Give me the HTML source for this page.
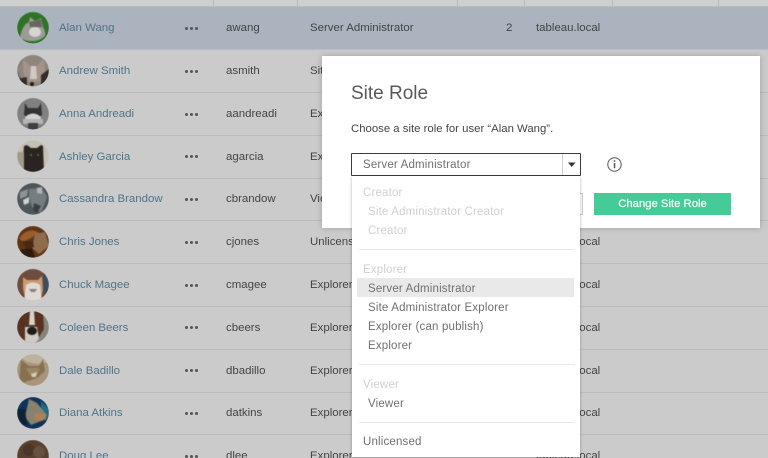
<!DOCTYPE html>
<html><head><meta charset="utf-8">
<style>
html,body{margin:0;padding:0}
body{width:768px;height:458px;overflow:hidden;position:relative;background:#cbcbcb;font-family:"Liberation Sans",sans-serif;font-size:11.45px;color:#444}
#w{position:absolute;left:0;top:0;width:768px;height:458px;overflow:hidden;filter:blur(.3px)}
.a{position:absolute;white-space:nowrap}
.row{position:absolute;left:0;width:768px;height:42px;border-bottom:1px solid #bcbcbc}
.t{position:absolute;top:0;line-height:42px;white-space:nowrap}
.n{left:59px;color:#4f7489}
.d{left:185px;top:18.500px;width:14px;height:4px}
.d i{position:absolute;top:1px;width:3px;height:3px;border-radius:50%;background:#555}
.u{left:226px}.r{left:310px}.s{left:536px}
.av{position:absolute;left:17px;top:4.500px;width:32px;height:32px;border-radius:50%;clip-path:circle(50%);filter:blur(.5px)}
.tick{position:absolute;top:0;width:1px;height:6px;background:#bcbcbc}
.m{font-size:11.5px;letter-spacing:.17px;position:absolute;white-space:nowrap;line-height:14px}
.g{color:#d0d0d0}.b{color:#707070}
.sep{position:absolute;left:359px;width:216px;height:1px;background:#e8e8e8}
</style></head><body><div id="w">
<div class="a" style="left:0;top:0;width:768px;height:6px;background:#cfcfcf;border-bottom:1px solid #bcbcbc"></div>
<div class="tick" style="left:213px"></div><div class="tick" style="left:297px"></div><div class="tick" style="left:457px"></div><div class="tick" style="left:524px"></div><div class="tick" style="left:612px"></div><div class="tick" style="left:718px"></div>

<div class="row" style="top:7px;background:#aab3be"><svg class="av" viewBox="0 0 32 32"><rect width="32" height="32" fill="#2f7325"/><path d="M3 26Q5 13 12 10L13 5 18 9 24 6 26 15Q29 20 28 24Q22 30 12 29Q6 28 3 26Z" fill="#9c9c96"/><path d="M12 10L18 9 24 7 25 15 13 15Z" fill="#66665f"/><ellipse cx="18" cy="20" rx="6" ry="5" fill="#d6d5d2"/></svg><div class="t n">Alan Wang</div><div class="t d"><i style="left:0"></i><i style="left:5px"></i><i style="left:10px"></i></div><div class="t u">awang</div><div class="t r">Server Administrator</div><div class="t" style="left:506px">2</div><div class="t s">tableau.local</div></div>

<div class="row" style="top:50px"><svg class="av" viewBox="0 0 32 32"><rect width="32" height="32" fill="#6d7570"/><path d="M0 14L9 0H26L32 10V18L24 32H8Z" fill="#8f867b"/><path d="M6 4l7 7h7l7-8 1 14-5 10H11L6 17z" fill="#a3938a"/><path d="M14 11h5l1 13h-7z" fill="#d0cac4"/><path d="M0 24L10 22V32H0zM24 20L32 14V32H24z" fill="#332e2b"/><circle cx="15" cy="29" r="2" fill="#1d1d1d"/></svg><div class="t n">Andrew Smith</div><div class="t d"><i style="left:0"></i><i style="left:5px"></i><i style="left:10px"></i></div><div class="t u">asmith</div><div class="t r">Site Administrator</div></div>

<div class="row" style="top:93px"><svg class="av" viewBox="0 0 32 32"><rect width="32" height="32" fill="#808080"/><path d="M8 5l3 5h10l3-5 1 12-5 4H12l-5-4z" fill="#333"/><path d="M8 19q8-7 16 0l-1 5H9z" fill="#d2d2d2"/><path d="M6 21H26V26H6z" fill="#b5b5b5"/><path d="M11 25H21V32H11z" fill="#404040"/></svg><div class="t n">Anna Andreadi</div><div class="t d"><i style="left:0"></i><i style="left:5px"></i><i style="left:10px"></i></div><div class="t u">aandreadi</div><div class="t r">Explorer</div></div>

<div class="row" style="top:135.700px"><svg class="av" viewBox="0 0 32 32"><rect width="32" height="32" fill="#c6bfb3"/><path d="M7 6l3-1 4 3h6l4-3 2 1 1 26H5z" fill="#292421"/><path d="M0 12l7 0 0 20H0z" fill="#a39a8d"/><circle cx="14" cy="15" r="1" fill="#77683a"/><circle cx="21" cy="15" r="1" fill="#77683a"/></svg><div class="t n">Ashley Garcia</div><div class="t d"><i style="left:0"></i><i style="left:5px"></i><i style="left:10px"></i></div><div class="t u">agarcia</div><div class="t r">Explorer</div></div>

<div class="row" style="top:178.400px"><svg class="av" viewBox="0 0 32 32"><rect width="32" height="32" fill="#4e565a"/><path d="M12 6L25 5L30 14L24 30L15 24L12 14z" fill="#767d82"/><path d="M3 9L11 6L10 13L3 16z" fill="#8d9498"/><path d="M6 17L12 14L12 20L7 22z" fill="#cfd0d0"/><path d="M20 5L25 4L25 11L20 10z" fill="#b0b5b8"/><path d="M17 20L24 23L20 30L16 27z" fill="#3a3f42"/></svg><div class="t n">Cassandra Brandow</div><div class="t d"><i style="left:0"></i><i style="left:5px"></i><i style="left:10px"></i></div><div class="t u">cbrandow</div><div class="t r">Viewer</div></div>

<div class="row" style="top:221.200px"><svg class="av" viewBox="0 0 32 32"><rect width="32" height="32" fill="#623416"/><path d="M2 12Q12 0 22 7L14 12L6 16z" fill="#9a5d2c"/><path d="M18 8L28 6L32 20L22 28L15 22z" fill="#8f6c4e"/><path d="M5 15h11l1 6-8 2z" fill="#472914"/><path d="M3 24L15 22L18 32H6z" fill="#2e1a0f"/></svg><div class="t n">Chris Jones</div><div class="t d"><i style="left:0"></i><i style="left:5px"></i><i style="left:10px"></i></div><div class="t u">cjones</div><div class="t r">Unlicensed</div><div class="t s">tableau.local</div></div>

<div class="row" style="top:264px"><svg class="av" viewBox="0 0 32 32"><rect width="32" height="32" fill="#6e4c3e"/><path d="M26 0H32V24L26 24z" fill="#3f4c5c"/><path d="M6 8l4 3h11l4-4 1 14-3 11H9L6 20z" fill="#cc9a70"/><path d="M9 16q7-5 14 0l2 16H7z" fill="#dedbd7"/><path d="M12 20l8 0-2 3h-4z" fill="#8c8078"/></svg><div class="t n">Chuck Magee</div><div class="t d"><i style="left:0"></i><i style="left:5px"></i><i style="left:10px"></i></div><div class="t u">cmagee</div><div class="t r">Explorer</div><div class="t s">tableau.local</div></div>

<div class="row" style="top:306.800px"><svg class="av" viewBox="0 0 32 32"><rect width="32" height="32" fill="#85847b"/><path d="M0 10L6 0H26L27 18L18 32H0z" fill="#573220"/><path d="M13 0h4l1 14h-6z" fill="#d8d2c8"/><path d="M8 16h12l2 12-4 4H8z" fill="#d0ccc5"/><ellipse cx="15" cy="20" rx="5" ry="4" fill="#1f1b1a"/></svg><div class="t n">Coleen Beers</div><div class="t d"><i style="left:0"></i><i style="left:5px"></i><i style="left:10px"></i></div><div class="t u">cbeers</div><div class="t r">Explorer</div><div class="t s">tableau.local</div></div>

<div class="row" style="top:349.600px"><svg class="av" viewBox="0 0 32 32"><rect width="32" height="32" fill="#a8957b"/><path d="M0 0H32V8L20 10L10 8z" fill="#bdb29c"/><path d="M4 6L12 12L22 12L26 5L28 17L20 24L2 30z" fill="#87714f"/><path d="M9 14h14l-3 7h-7z" fill="#9b8768"/><path d="M14 20l6-2-1 5h-4z" fill="#d6ccb9"/></svg><div class="t n">Dale Badillo</div><div class="t d"><i style="left:0"></i><i style="left:5px"></i><i style="left:10px"></i></div><div class="t u">dbadillo</div><div class="t r">Explorer</div><div class="t s">tableau.local</div></div>

<div class="row" style="top:392.400px"><svg class="av" viewBox="0 0 32 32"><rect width="32" height="32" fill="#10335a"/><path d="M24 4L32 12V24L24 22z" fill="#1f6a84"/><path d="M12 2L20 6L30 18L24 24L14 28L8 20z" fill="#878270"/><ellipse cx="23" cy="20" rx="6" ry="4" fill="#ad8058"/><path d="M0 12L8 12L10 28H0z" fill="#0e2236"/></svg><div class="t n">Diana Atkins</div><div class="t d"><i style="left:0"></i><i style="left:5px"></i><i style="left:10px"></i></div><div class="t u">datkins</div><div class="t r">Explorer</div><div class="t s">tableau.local</div></div>

<div class="row" style="top:435.200px"><svg class="av" viewBox="0 0 32 32"><rect width="32" height="32" fill="#57402f"/><circle cx="12" cy="10" r="6" fill="#4a3526"/><circle cx="22" cy="12" r="6" fill="#665040"/></svg><div class="t n">Doug Lee</div><div class="t d"><i style="left:0"></i><i style="left:5px"></i><i style="left:10px"></i></div><div class="t u">dlee</div><div class="t r">Explorer</div><div class="t s">tableau.local</div></div>

<!-- modal -->
<div class="a" style="left:322px;top:56px;width:438px;height:172px;background:#fff;box-shadow:0 0 6px rgba(0,0,0,.22)"></div>
<div class="a" style="left:351px;top:82px;font-size:19px;line-height:24px;color:#595959">Site Role</div>
<div class="a" style="left:351px;top:122px;line-height:14px;font-size:11.360px;color:#454545">Choose a site role for user “Alan Wang”.</div>
<div class="a" style="left:351px;top:153px;width:228px;height:21px;border:1px solid #3c3c3c;border-radius:1px;background:#fff"></div>
<div class="m b" style="left:363px;top:158px">Server Administrator</div>
<div class="a" style="left:562px;top:154px;width:1px;height:21px;background:#cfcfcf"></div>
<svg class="a" style="left:568px;top:162px" width="8" height="6" viewBox="0 0 8 6"><path d="M0 .5H7.500L3.750 5Z" fill="#333"/></svg>
<svg class="a" style="left:606px;top:156px" width="17" height="17" viewBox="0 0 17 17"><circle cx="8.500" cy="8.500" r="6.700" fill="none" stroke="#666" stroke-width="1.100"/><rect x="7.800" y="7" width="1.500" height="5.200" fill="#555"/><circle cx="8.500" cy="5" r=".9" fill="#555"/></svg>
<div class="a" style="left:576px;top:193px;width:7px;height:22px;background:#fff;border:1px solid #ccc;box-sizing:border-box"></div>
<div class="a" style="left:594px;top:193px;width:137px;height:22px;background:#45cb97;color:#f4fcf8;text-align:center;line-height:23px;font-size:11.300px;-webkit-text-stroke:.25px #f4fcf8">Change Site Role</div>

<!-- dropdown -->
<div class="a" style="left:352px;top:176px;width:228px;height:281px;background:#fff;box-shadow:0 1px 3px rgba(0,0,0,.3)"></div>
<div class="m g" style="left:363px;top:186px">Creator</div>
<div class="m g" style="left:368px;top:205px">Site Administrator Creator</div>
<div class="m g" style="left:368px;top:224px">Creator</div>
<div class="sep" style="top:249px"></div>
<div class="m g" style="left:363px;top:263px">Explorer</div>
<div class="a" style="left:357px;top:278px;width:217px;height:19px;background:#e9e9e9"></div>
<div class="m b" style="left:368px;top:282px">Server Administrator</div>
<div class="m b" style="left:368px;top:301px">Site Administrator Explorer</div>
<div class="m b" style="left:368px;top:320px">Explorer (can publish)</div>
<div class="m b" style="left:368px;top:339px">Explorer</div>
<div class="sep" style="top:364px"></div>
<div class="m g" style="left:363px;top:378px">Viewer</div>
<div class="m b" style="left:368px;top:397px">Viewer</div>
<div class="sep" style="top:422px"></div>
<div class="m b" style="left:363px;top:435px">Unlicensed</div>
</div></body></html>
